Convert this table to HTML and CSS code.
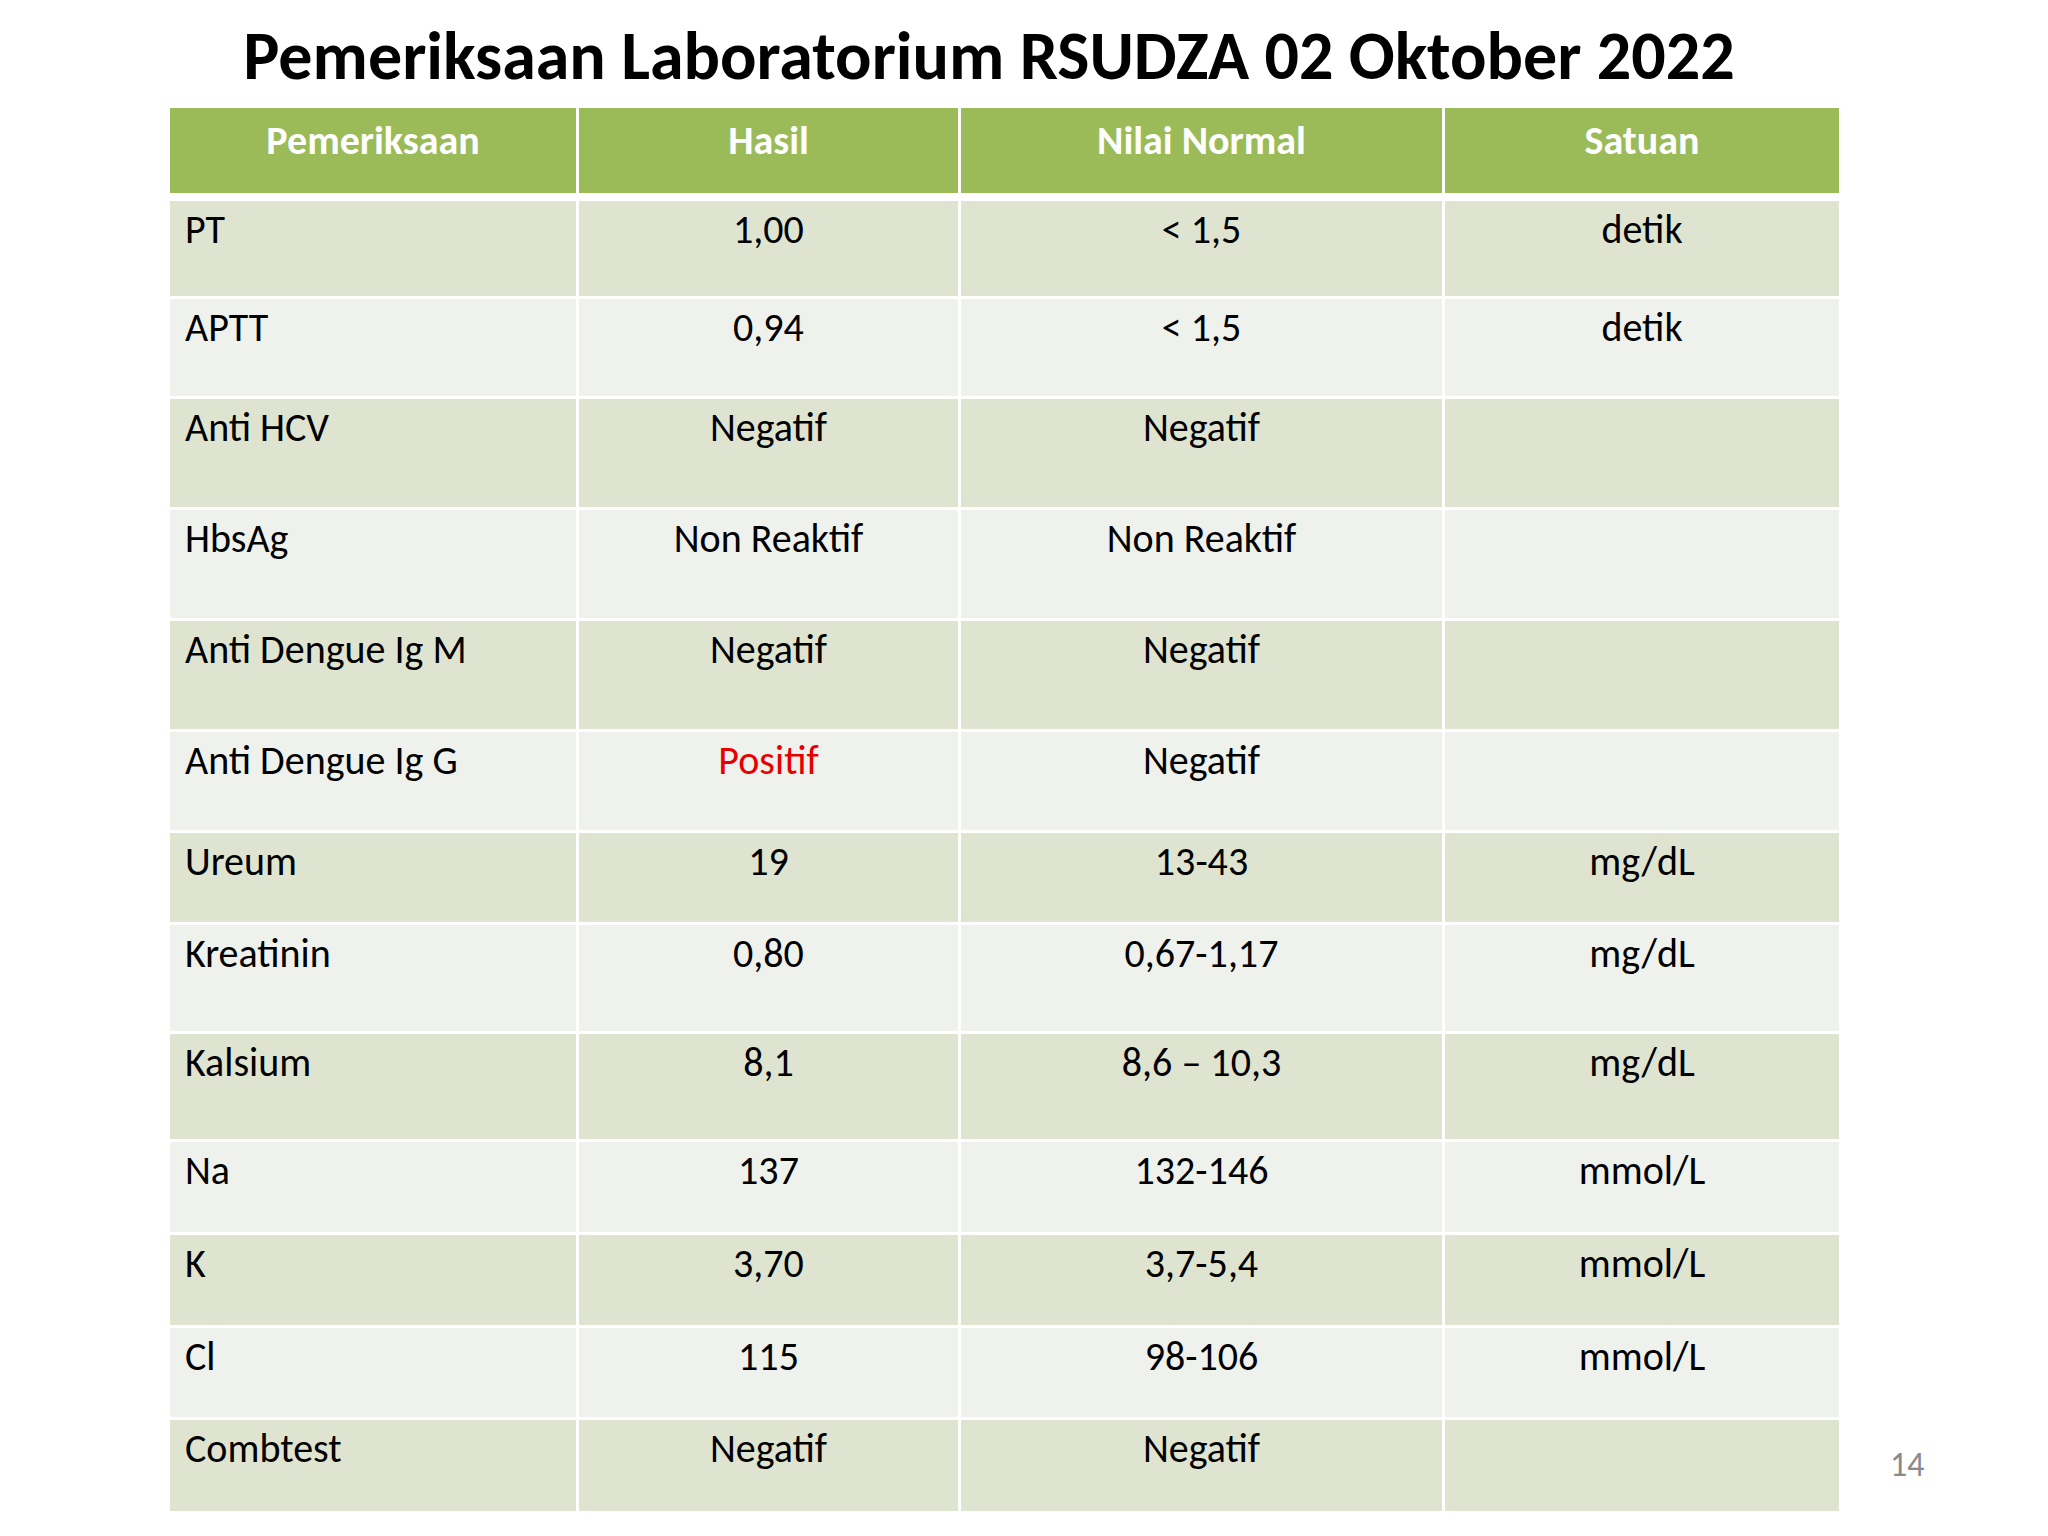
FILE: index.html
```html
<!DOCTYPE html>
<html lang="id">
<head>
<meta charset="utf-8">
<title>Pemeriksaan Laboratorium RSUDZA 02 Oktober 2022</title>
<link rel="stylesheet" href="styles.css">
</head>
<body>
<div class="slide">
  <h1 class="title">Pemeriksaan Laboratorium RSUDZA 02 Oktober 2022</h1>
  <div class="bottom">
    <div class="lab-table">
      <div class="row head">
        <div class="cell">Pemeriksaan</div>
        <div class="cell">Hasil</div>
        <div class="cell">Nilai Normal</div>
        <div class="cell">Satuan</div>
      </div>
      <div class="row odd">
        <div class="cell name">PT</div>
        <div class="cell">1,00</div>
        <div class="cell">&lt; 1,5</div>
        <div class="cell">detik</div>
      </div>
      <div class="row even">
        <div class="cell name">APTT</div>
        <div class="cell">0,94</div>
        <div class="cell">&lt; 1,5</div>
        <div class="cell">detik</div>
      </div>
      <div class="row odd">
        <div class="cell name">Anti HCV</div>
        <div class="cell">Negatif</div>
        <div class="cell">Negatif</div>
        <div class="cell"></div>
      </div>
      <div class="row even">
        <div class="cell name">HbsAg</div>
        <div class="cell">Non Reaktif</div>
        <div class="cell">Non Reaktif</div>
        <div class="cell"></div>
      </div>
      <div class="row odd">
        <div class="cell name">Anti Dengue Ig M</div>
        <div class="cell">Negatif</div>
        <div class="cell">Negatif</div>
        <div class="cell"></div>
      </div>
      <div class="row even">
        <div class="cell name">Anti Dengue Ig G</div>
        <div class="cell abnormal">Positif</div>
        <div class="cell">Negatif</div>
        <div class="cell"></div>
      </div>
      <div class="row odd">
        <div class="cell name">Ureum</div>
        <div class="cell">19</div>
        <div class="cell">13-43</div>
        <div class="cell">mg/dL</div>
      </div>
      <div class="row even">
        <div class="cell name">Kreatinin</div>
        <div class="cell">0,80</div>
        <div class="cell">0,67-1,17</div>
        <div class="cell">mg/dL</div>
      </div>
      <div class="row odd">
        <div class="cell name">Kalsium</div>
        <div class="cell">8,1</div>
        <div class="cell">8,6 – 10,3</div>
        <div class="cell">mg/dL</div>
      </div>
      <div class="row even">
        <div class="cell name">Na</div>
        <div class="cell">137</div>
        <div class="cell">132-146</div>
        <div class="cell">mmol/L</div>
      </div>
      <div class="row odd">
        <div class="cell name">K</div>
        <div class="cell">3,70</div>
        <div class="cell">3,7-5,4</div>
        <div class="cell">mmol/L</div>
      </div>
      <div class="row even">
        <div class="cell name">Cl</div>
        <div class="cell">115</div>
        <div class="cell">98-106</div>
        <div class="cell">mmol/L</div>
      </div>
      <div class="row odd">
        <div class="cell name">Combtest</div>
        <div class="cell">Negatif</div>
        <div class="cell">Negatif</div>
        <div class="cell"></div>
      </div>
    </div>
    <div class="page-num">14</div>
  </div>
</div>
</body>
</html>
```

FILE: styles.css
```css
html, body {
  margin: 0;
  padding: 0;
  background: #ffffff;
}

.slide {
  width: 2048px;
  height: 1536px;
  box-sizing: border-box;
  padding-left: 170px;
  font-family: Carlito, Calibri, Lato, "Liberation Sans", sans-serif;
  color: #000000;
}

.title {
  margin: 0;
  width: 1638px;
  height: 108px;
  box-sizing: border-box;
  padding-top: 18px;
  text-align: center;
  font-size: 68px;
  font-weight: 700;
  line-height: 76px;
  white-space: nowrap;
}

.bottom {
  display: flex;
  align-items: flex-end;
}

.lab-table {
  display: grid;
  grid-template-columns: 406px 379px 481px 394px;
  grid-template-rows: 90px 95px 97px 108px 108px 108px 98px 89px 106px 105px 90px 90px 89px 91px;
  column-gap: 3px;
  row-gap: 3px;
}

.row {
  display: contents;
}

.cell {
  font-size: 40px;
  line-height: 50px;
  padding-top: 4px;
  text-align: center;
  box-sizing: border-box;
  white-space: nowrap;
}

.cell.name {
  text-align: left;
  padding-left: 15px;
}

.head .cell {
  height: 85px;
  align-self: start;
  background: #9bbb59;
  color: #ffffff;
  font-weight: 700;
  padding-top: 8px;
}

.odd .cell {
  background: #dfe4d0;
}

.even .cell {
  background: #eff1ec;
}

.cell.abnormal {
  color: #e60000;
}

.page-num {
  margin-left: 51px;
  margin-bottom: 26px;
  font-size: 34px;
  line-height: 40px;
  color: #8a8a8a;
}
```
